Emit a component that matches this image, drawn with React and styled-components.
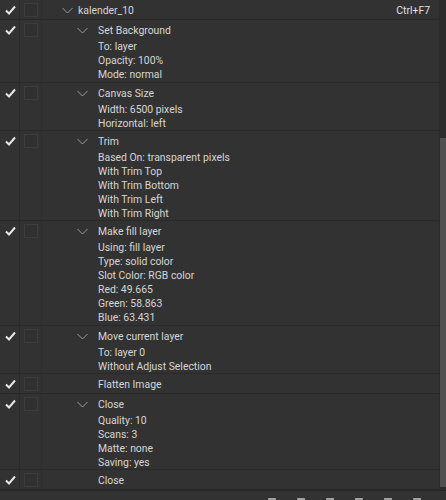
import React from 'react'
import styled, { createGlobalStyle } from 'styled-components';

const Global = createGlobalStyle`
    html, body { margin:0; padding:0; background:#323232; }
    body { font-family: Roboto, "Noto Sans", sans-serif; }
`;

const Panel = styled.div`
    width:446px;
    height:500px;
    display:flex;
    flex-direction:column;
    background:#323232;
    color:#d6d6d6;
    font-size:10.4px;
    overflow:hidden;
`;

const Body = styled.div`
    height:490px;
    display:flex;
    flex-shrink:0;
`;

const List = styled.div`
    flex:1;
    display:flex;
    flex-direction:column;
    border-right:1px solid #2b2b2b;
`;

const Scrollbar = styled.div`
    width:6px;
    display:flex;
    flex-direction:column;
    background:#2c2c2c;
    padding-top:138px;
    padding-bottom:3px;
`;

const Thumb = styled.div`
    flex:1;
    background:#505050;
`;

const Group = styled.div`
    display:flex;
    flex-shrink:0;
    box-shadow:inset 0 -1px 0 #292929;
`;

const CheckCol = styled.div`
    width:20px;
    box-shadow:inset -1px 0 0 #2b2b2b;
    display:flex;
    justify-content:center;
    align-items:flex-start;
    padding-top:5px;
`;

const BoxCol = styled.div`
    width:22px;
    box-shadow:inset -1px 0 0 #2e2e2e;
    display:flex;
    justify-content:center;
    align-items:flex-start;
    padding-top:3px;
`;

const Box = styled.div`
    width:12px;
    height:12px;
    border:1px solid #3c3c3c;
    background:#303030;
`;

const Content = styled.div`
    flex:1;
    display:flex;
    flex-direction:column;
    padding-bottom:${p => p.$pad}px;
`;

const Header = styled.div`
    height:20px;
    flex-shrink:0;
    display:flex;
    align-items:center;
    padding-left:${p => p.$indent}px;
`;

const Chevron = styled.span`
    width:16px;
    display:flex;
    align-items:center;
    margin-right:${p => p.$gap}px;
`;

const Title = styled.span`
    flex:1;
    white-space:nowrap;
`;

const Shortcut = styled.span`
    padding-right:9px;
    color:#e0e0e0;
`;

const Detail = styled.div`
    height:14px;
    flex-shrink:0;
    line-height:14px;
    padding-left:56px;
    white-space:nowrap;
`;

const Toolbar = styled.div`
    height:10px;
    flex-shrink:0;
    border-top:1px solid #262626;
    background:#323232;
    display:flex;
    gap:21px;
    padding-left:268px;
    padding-top:7px;
    box-sizing:border-box;
`;

const Tool = styled.span`
    width:8px;
    height:3px;
    border-top:2px solid #a0a0a0;
    border-left:1px solid #8a8a8a;
    border-right:1px solid #8a8a8a;
    box-sizing:border-box;
`;

const Check = () => (
    <svg width="11" height="10" viewBox="0 0 11 10">
        <path d="M1 5.5 L4 8.5 L10 1.5" fill="none" stroke="#e6e6e6" strokeWidth="2" />
    </svg>
);

const Down = () => (
    <svg width="11" height="7" viewBox="0 0 11 7">
        <path d="M0.5 1 L5.5 6 L10.5 1" fill="none" stroke="#9a9a9a" strokeWidth="1" />
    </svg>
);

const steps = [
    { title: 'Set Background', pad: 1, details: ['To: layer', 'Opacity: 100%', 'Mode: normal'] },
    { title: 'Canvas Size', pad: 0, details: ['Width: 6500 pixels', 'Horizontal: left'] },
    { title: 'Trim', pad: 0, details: ['Based On: transparent pixels', 'With Trim Top', 'With Trim Bottom', 'With Trim Left', 'With Trim Right'] },
    { title: 'Make fill layer', pad: 1, details: ['Using: fill layer', 'Type: solid color', 'Slot Color: RGB color', 'Red: 49.665', 'Green: 58.863', 'Blue: 63.431'] },
    { title: 'Move current layer', pad: 0, details: ['To: layer 0', 'Without Adjust Selection'] },
    { title: 'Flatten Image', pad: 0, details: [] },
    { title: 'Close', pad: 0, details: ['Quality: 10', 'Scans: 3', 'Matte: none', 'Saving: yes'] },
    { title: 'Close', pad: 0, details: [] },
];

export default function App() {
    return (
        <Panel>
            <Global />
            <Body>
                <List>
                    <Group>
                        <CheckCol><Check /></CheckCol>
                        <BoxCol><Box /></BoxCol>
                        <Content $pad={0}>
                            <Header $indent={20}>
                                <Chevron $gap={0}><Down /></Chevron>
                                <Title>kalender_10</Title>
                                <Shortcut>Ctrl+F7</Shortcut>
                            </Header>
                        </Content>
                    </Group>
                    {steps.map((s, i) => (
                        <Group key={i}>
                            <CheckCol><Check /></CheckCol>
                            <BoxCol><Box /></BoxCol>
                            <Content $pad={s.pad}>
                                <Header $indent={35}>
                                    <Chevron $gap={5}>{s.details.length > 0 && <Down />}</Chevron>
                                    <Title>{s.title}</Title>
                                </Header>
                                {s.details.map(d => <Detail key={d}>{d}</Detail>)}
                            </Content>
                        </Group>
                    ))}
                </List>
                <Scrollbar><Thumb /></Scrollbar>
            </Body>
            <Toolbar>
                <Tool /><Tool /><Tool /><Tool /><Tool /><Tool />
            </Toolbar>
        </Panel>
    );
}
